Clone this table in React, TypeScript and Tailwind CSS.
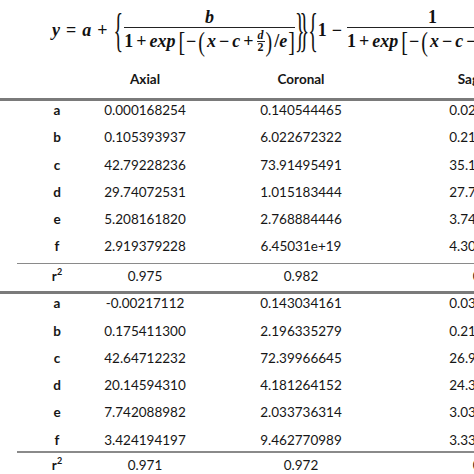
import React from 'react';

const font = { fontFamily: '"Lato", "Open Sans", sans-serif' };
const math = { fontFamily: '"Liberation Serif", "DejaVu Serif", serif' };

type Row = [string, string, string, string];

const top: Row[] = [
  ['a', '0.000168254', '0.140544465', '0.026513327'],
  ['b', '0.105393937', '6.022672322', '0.214063318'],
  ['c', '42.79228236', '73.91495491', '35.16289117'],
  ['d', '29.74072531', '1.015183444', '27.72318463'],
  ['e', '5.208161820', '2.768884446', '3.741055273'],
  ['f', '2.919379228', '6.45031e+19', '4.300411932'],
];

const bottom: Row[] = [
  ['a', '-0.00217112', '0.143034161', '0.031177842'],
  ['b', '0.175411300', '2.196335279', '0.213549021'],
  ['c', '42.64712232', '72.39966645', '26.94115290'],
  ['d', '20.14594310', '4.181264152', '24.34471256'],
  ['e', '7.742088982', '2.033736314', '3.031627784'],
  ['f', '3.424194197', '9.462770989', '3.337150244'],
];

const cols = 'grid grid-cols-[80px_96px_216px_162px] ml-[17px] w-[554px]';

function DataRow({ r }: { r: Row }) {
  return (
    <div className={`${cols} h-[27.3px] leading-[18px]`}>
      <div className="text-center font-bold">{r[0]}</div>
      <div className="text-center">{r[1]}</div>
      <div className="text-center">{r[2]}</div>
      <div className="text-center whitespace-nowrap">{r[3]}</div>
    </div>
  );
}

function R2Row({ v }: { v: [string, string, string] }) {
  return (
    <div className={`${cols} h-[27px] leading-[18px] pt-[3px]`}>
      <div className="text-center font-bold">
        r<span className="text-[9px] relative -top-[6px]">2</span>
      </div>
      <div className="text-center">{v[0]}</div>
      <div className="text-center">{v[1]}</div>
      <div className="text-center">{v[2]}</div>
    </div>
  );
}

function Big({ ch, size = 'text-[20px]', scale = 'scale-y-[2.3]', cls = '' }: { ch: string; size?: string; scale?: string; cls?: string }) {
  return <span className={`${size} ${scale} ${cls} inline-block leading-none font-normal not-italic`}>{ch}</span>;
}

function Denominator({ sign }: { sign: string }) {
  return (
    <div className="flex items-center border-t-[1.5px] border-[#222] pt-[1px] h-[27px]">
      <span>1</span>
      <span className="mx-[3px] not-italic">+</span>
      <span className="italic">exp</span>
      <Big ch="[" size="text-[20px]" scale="scale-y-[1.4]" cls="ml-[3px] mr-[1px]" />
      <span className="not-italic">−</span>
      <Big ch="(" size="text-[20px]" scale="scale-y-[1.4]" cls="mx-[2px]" />
      <span className="italic">x</span>
      <span className="mx-[3px]">−</span>
      <span className="italic">c</span>
      <span className="mx-[3px]">{sign}</span>
      <span className="inline-flex flex-col items-center text-[12px] leading-[11px]">
        <span className="italic border-b border-[#222] px-[1px]">d</span>
        <span>2</span>
      </span>
      <Big ch=")" size="text-[20px]" scale="scale-y-[1.4]" cls="mx-[1px]" />
      <span className="ml-[1px]">/</span>
      <span className="italic">e</span>
      <Big ch="]" size="text-[20px]" scale="scale-y-[1.4]" cls="ml-[1px]" />
    </div>
  );
}

function Formula() {
  return (
    <div className="h-[58px] flex items-center pl-[52px] pt-[2px] text-[18px] font-bold text-[#111] whitespace-nowrap" style={math}>
      <span className="italic">y</span>
      <span className="mx-[6px]">=</span>
      <span className="italic">a</span>
      <span className="mx-[6px]">+</span>
      <Big ch="{" cls="mr-[1px]" />
      <div className="flex flex-col items-center">
        <div className="italic leading-[20px]">b</div>
        <Denominator sign="+" />
      </div>
      <Big ch="}" />
      <Big ch="}" cls="-ml-[5px]" />
      <Big ch="{" cls="-ml-[1px]" />
      <span>1</span>
      <span className="mx-[5px]">−</span>
      <div className="flex flex-col items-center">
        <div className="leading-[20px]">1</div>
        <Denominator sign="−" />
      </div>
      <Big ch="}" />
    </div>
  );
}

export default function App() {
  return (
    <div className="w-[474px] h-[474px] overflow-hidden bg-white text-[#161616] text-[13.5px]" style={font}>
      <Formula />
      <div className={`${cols} h-[40px] items-center font-bold pt-[3px]`}>
        <div />
        <div className="text-center">Axial</div>
        <div className="text-center">Coronal</div>
        <div className="text-center pr-[20px]">Sagittal</div>
      </div>
      <div className="h-[3px] bg-[#7a7a7a]" />
      {top.map((r) => (
        <DataRow key={r[0]} r={r} />
      ))}
      <div className="ml-[17px] h-[1.5px] bg-[#8a8a8a] -mt-[2px]" />
      <R2Row v={['0.975', '0.982', '0.981']} />
      <div className="h-[3px] bg-[#7a7a7a]" />
      {bottom.map((r) => (
        <DataRow key={r[0]} r={r} />
      ))}
      <div className="ml-[17px] h-[1.5px] bg-[#8a8a8a] -mt-[7px]" />
      <R2Row v={['0.971', '0.972', '0.970']} />
    </div>
  );
}
